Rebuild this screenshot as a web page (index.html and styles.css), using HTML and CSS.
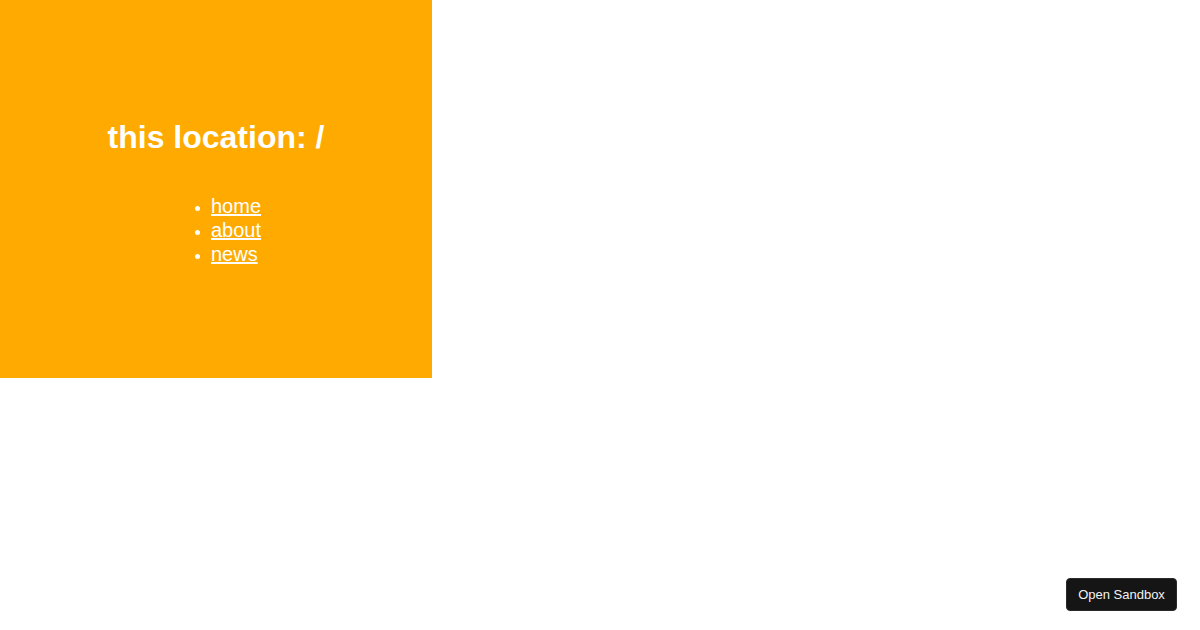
FILE: index.html
```html
<!DOCTYPE html>
<html>
<head>
<meta charset="utf-8">
<link rel="stylesheet" href="styles.css">
</head>
<body>
<div class="panel">
  <h1 class="title">this location: /</h1>
  <ul class="nav">
    <li><a href="#">home</a></li>
    <li><a href="#">about</a></li>
    <li><a href="#">news</a></li>
  </ul>
</div>
<a class="sandbox" href="#">Open Sandbox</a>
</body>
</html>
```
FILE: styles.css
```css
html, body {
  margin: 0;
  padding: 0;
  background: #ffffff;
  font-family: "Liberation Sans", Arial, sans-serif;
}
.panel {
  width: 432px;
  height: 378px;
  background: #ffaa00;
  color: #ffffff;
  display: flex;
  flex-direction: column;
  align-items: center;
  justify-content: center;
  box-sizing: border-box;
  padding-top: 6px;
}
.title {
  margin: 0 0 38px;
  font-size: 32px;
  font-weight: bold;
  line-height: 37px;
  text-align: center;
}
.nav {
  margin: 0;
  padding-left: 40px;
  font-size: 20px;
  line-height: 24px;
  text-align: left;
}
.nav li::marker {
  font-size: 15px;
}
.nav a {
  color: #ffffff;
  text-decoration: underline;
}
.sandbox {
  position: fixed;
  right: 23px;
  bottom: 19px;
  width: 111px;
  height: 33px;
  box-sizing: border-box;
  display: flex;
  align-items: center;
  justify-content: center;
  background: #151515;
  color: #f2f2f2;
  border: 1px solid #2a2a2a;
  border-radius: 4px;
  font-family: "Liberation Sans", Arial, sans-serif;
  font-size: 13px;
  text-decoration: none;
}
```
